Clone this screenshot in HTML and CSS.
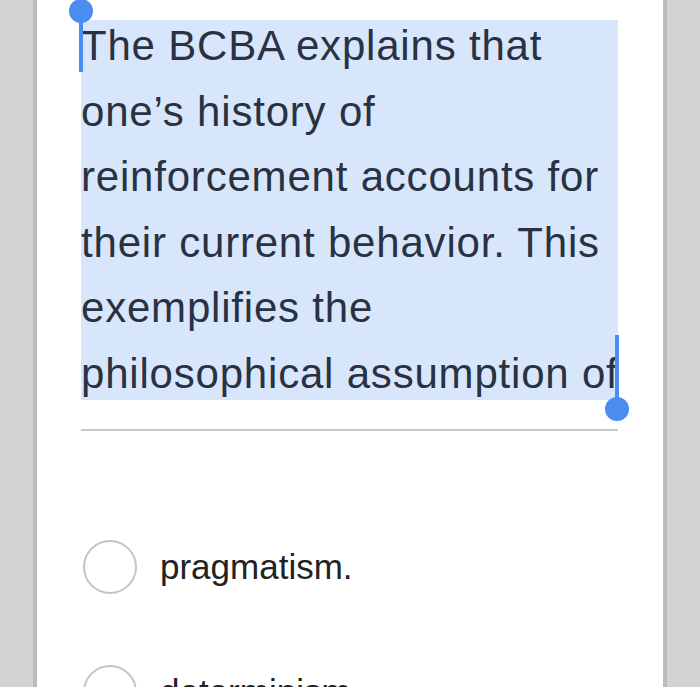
FILE: index.html
```html
<!DOCTYPE html>
<html lang="en">
<head>
<meta charset="utf-8">
<title>Question</title>
<link rel="stylesheet" href="styles.css">
</head>
<body>
<main class="card">
  <div class="question">
    <p class="question-text">The BCBA explains that one’s history of reinforcement accounts for their current behavior. This exemplifies the philosophical assumption of</p>
    <span class="handle handle-start"><span class="knob"></span></span>
    <span class="handle handle-end"><span class="knob"></span></span>
  </div>
  <hr class="divider">
  <ul class="options">
    <li class="option"><span class="radio"></span><span class="label">pragmatism.</span></li>
    <li class="option"><span class="radio"></span><span class="label">determinism.</span></li>
  </ul>
</main>
</body>
</html>
```
FILE: styles.css
```css
html, body {
  margin: 0;
  padding: 0;
}
body {
  background: #d3d3d3;
  height: 687px;
  overflow: hidden;
  font-family: "Liberation Sans", Arial, sans-serif;
}
.card {
  box-sizing: border-box;
  margin: 0 33px;
  height: 687px;
  overflow: hidden;
  background: #ffffff;
  border-left: 4px solid #bbbbbb;
  border-right: 4px solid #bbbbbb;
  padding: 13px 45px 0 44px;
}
.question {
  position: relative;
}
.question-text {
  margin: 0 -8px 0 0;
  font-size: 42px;
  letter-spacing: 0.8px;
  line-height: 65.6px;
  color: #2a3242;
  background-image: linear-gradient(to bottom, transparent 7px, #d8e6fc 7px, #d8e6fc 387px, transparent 387px);
  background-size: 537px 100%;
  background-repeat: no-repeat;
}
.handle {
  position: absolute;
  width: 4px;
  background: #4a8cf0;
}
.handle-start {
  left: -2px;
  top: 7px;
  height: 52px;
}
.handle-end {
  left: 534px;
  top: 322px;
  height: 65px;
}
.knob {
  position: absolute;
  width: 24px;
  height: 24px;
  border-radius: 50%;
  background: #4a8cf0;
  left: -10px;
}
.handle-start .knob {
  top: -21px;
}
.handle-end .knob {
  bottom: -21px;
}
.divider {
  margin: 22px 0 0 0;
  border: 0;
  height: 2px;
  background: #c9c9c9;
}
.options {
  list-style: none;
  margin: 0;
  padding: 109px 0 0 2px;
  display: flex;
  flex-direction: column;
  gap: 71px;
}
.option {
  display: flex;
  align-items: center;
  gap: 23px;
  height: 54px;
}
.radio {
  box-sizing: border-box;
  width: 54px;
  height: 54px;
  border-radius: 50%;
  border: 2px solid #c4c4c4;
  flex: none;
}
.label {
  font-size: 35px;
  color: #222222;
}
```
